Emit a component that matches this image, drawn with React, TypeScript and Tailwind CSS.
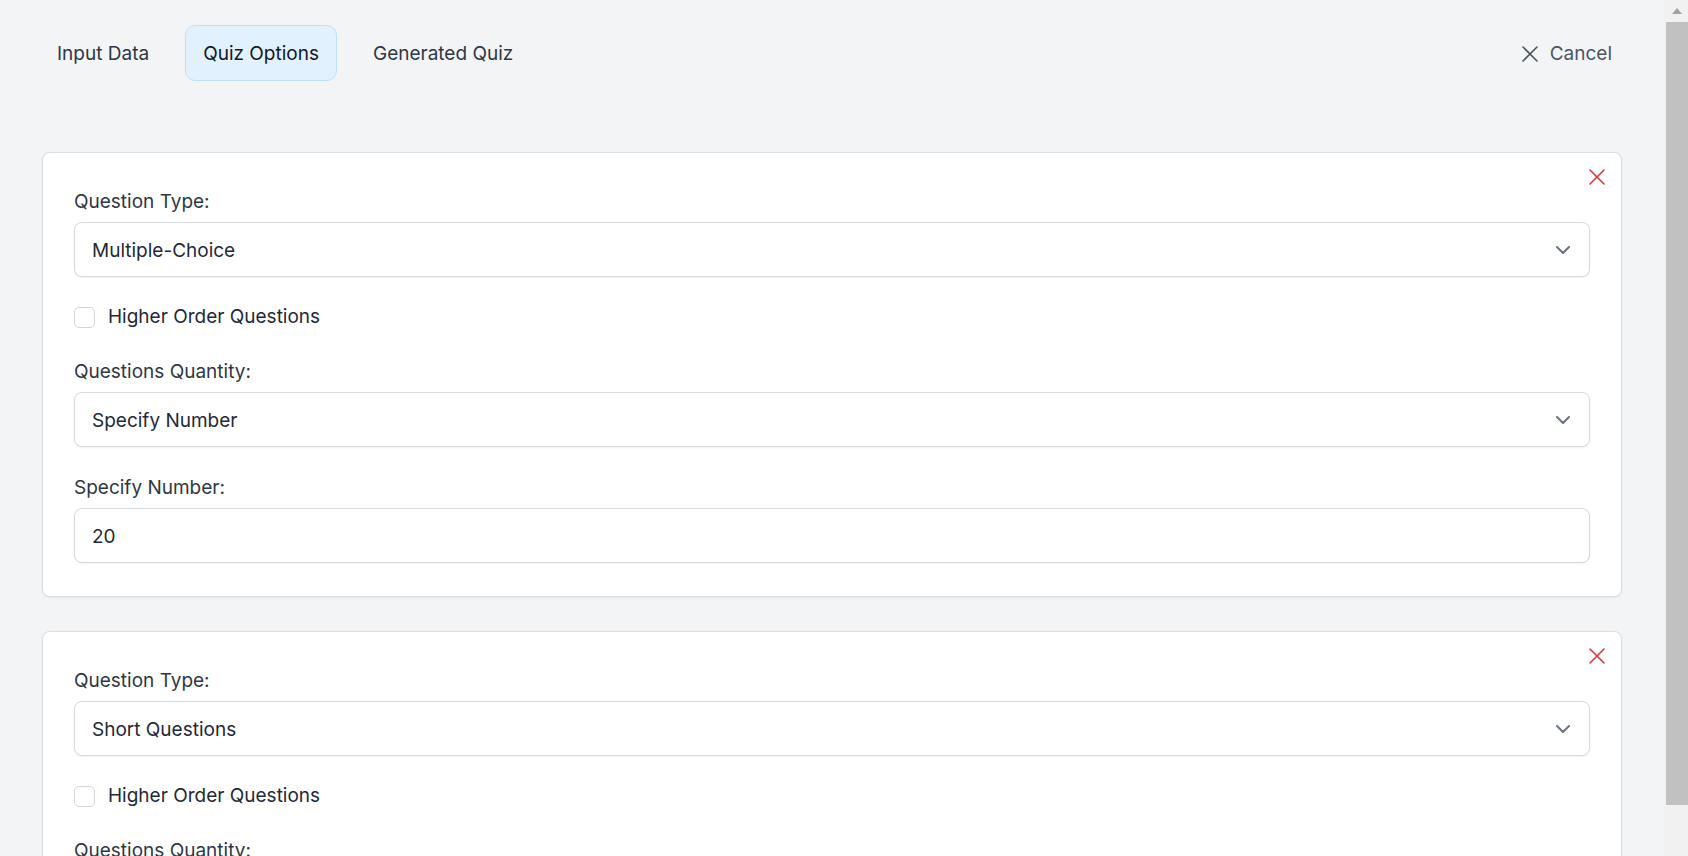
import React from "react";

const font = { fontFamily: "Inter, 'Noto Sans', sans-serif" };

function XIcon({ className, size = 16, stroke = 1.6 }: { className?: string; size?: number; stroke?: number }) {
  return (
    <svg width={size} height={size} viewBox="0 0 16 16" fill="none" className={className}>
      <path d="M1 1L15 15M15 1L1 15" stroke="currentColor" strokeWidth={stroke} strokeLinecap="round" />
    </svg>
  );
}

function Chevron() {
  return (
    <svg width="14" height="8" viewBox="0 0 14 8" fill="none" className="text-[#6b7280]">
      <path d="M1 1l6 6 6-6" stroke="currentColor" strokeWidth="2" strokeLinecap="round" strokeLinejoin="round" />
    </svg>
  );
}

function Label({ children }: { children: React.ReactNode }) {
  return <div className="text-[19px] leading-[27px] text-[#2f3744] mb-[7px]">{children}</div>;
}

function Select({ value }: { value: string }) {
  return (
    <div className="h-[55px] rounded-[8px] border border-[#d6d9de] bg-white shadow-[0_1px_2px_rgba(0,0,0,0.06)] flex items-center justify-between pl-[17px] pr-[19px]">
      <span className="text-[19px] text-[#1f2937] pt-[3px]">{value}</span>
      <Chevron />
    </div>
  );
}

function Input({ value }: { value: string }) {
  return (
    <div className="h-[55px] rounded-[8px] border border-[#d6d9de] bg-white shadow-[0_1px_2px_rgba(0,0,0,0.06)] flex items-center pl-[17px]">
      <span className="text-[19px] text-[#1f2937] pt-[3px]">{value}</span>
    </div>
  );
}

function Card({ type }: { type: string }) {
  return (
    <div className="relative rounded-[8px] border border-[#dadde2] bg-white shadow-[0_1px_3px_rgba(0,0,0,0.05)] pt-[35px] pb-[33px] px-[31px] flex flex-col gap-[27px]">
      <button className="absolute top-[16px] right-[16px] text-[#dc2f3a]">
        <XIcon size={16} stroke={1.5} />
      </button>
      <div>
        <Label>Question Type:</Label>
        <Select value={type} />
      </div>
      <div className="flex items-center gap-[13px] h-[27px]">
        <div className="w-[21px] h-[21px] rounded-[5px] border border-[#d1d5db] bg-white" />
        <span className="text-[19px] text-[#1f2937]">Higher Order Questions</span>
      </div>
      <div>
        <Label>Questions Quantity:</Label>
        <Select value="Specify Number" />
      </div>
      <div>
        <Label>Specify Number:</Label>
        <Input value="20" />
      </div>
    </div>
  );
}

function Scrollbar() {
  return (
    <div className="w-[24px] shrink-0 bg-[#f1f1f1] flex flex-col pl-[2px]">
      <div className="h-[22px] flex items-center justify-center">
        <svg width="10" height="6" viewBox="0 0 10 6">
          <path d="M5 0L10 6H0Z" fill="#a3a3a3" />
        </svg>
      </div>
      <div className="h-[783px] bg-[#c1c1c1]" />
    </div>
  );
}

export default function App() {
  return (
    <div style={font} className="h-screen flex bg-[#f3f4f6] overflow-hidden">
      <div className="flex-1 min-w-0 overflow-hidden">
        <div className="flex items-center justify-between pl-[39px] pr-[42px] pt-[25px]">
          <div className="flex items-center gap-[18px]">
            <button className="h-[56px] px-[17px] rounded-[10px] border border-transparent text-[19px] text-[#2f3744] pt-[2px]">
              Input Data
            </button>
            <button className="h-[56px] px-[17px] rounded-[10px] border border-[#bde2f8] bg-[#e1f1fd] text-[19px] text-[#111827] pt-[2px]">
              Quiz Options
            </button>
            <button className="h-[56px] px-[17px] rounded-[10px] border border-transparent text-[19px] text-[#2f3744] pt-[2px]">
              Generated Quiz
            </button>
          </div>
          <button className="flex items-center gap-[12px] px-[10px] h-[40px] text-[19px] text-[#4b5563] pt-[2px]">
            <XIcon size={16} stroke={1.6} />
            <span>Cancel</span>
          </button>
        </div>
        <div className="mt-[71px] mx-[42px] flex flex-col gap-[34px] pb-[34px]">
          <Card type="Multiple-Choice" />
          <Card type="Short Questions" />
        </div>
      </div>
      <Scrollbar />
    </div>
  );
}
